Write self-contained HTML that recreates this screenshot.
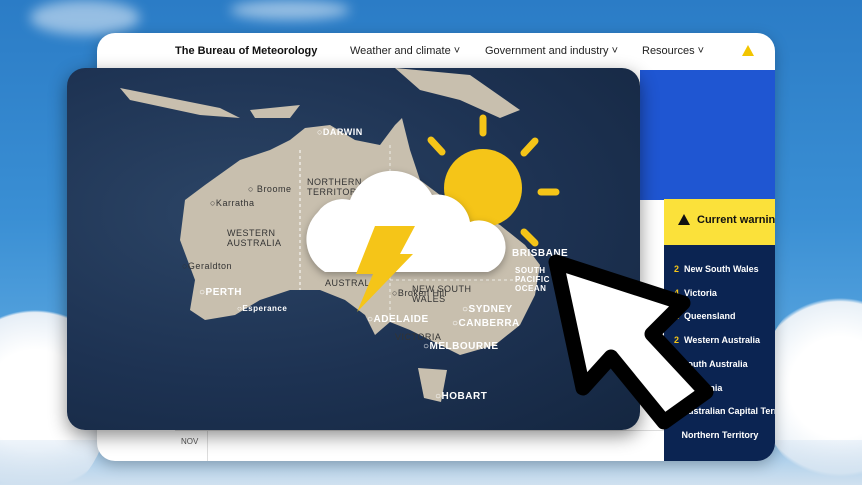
<!DOCTYPE html>
<html style="width:862px;height:485px;overflow:hidden"><head><meta charset="utf-8"><style>
*{margin:0;padding:0;box-sizing:border-box}
body{width:862px;height:485px;overflow:hidden;position:relative;font-family:"Liberation Sans",sans-serif;
background:linear-gradient(180deg,#2b7cc6 0%,#3a8fd4 45%,#5aa6df 75%,#8cbfe6 100%)}
.abs{position:absolute}
.card{left:97px;top:33px;width:678px;height:428px;background:#fff;border-radius:18px;overflow:hidden;box-shadow:0 4px 14px rgba(0,0,0,.25)}
.nav{font-size:11px;color:#222;top:45px;white-space:nowrap}
.map{left:67px;top:68px;width:573px;height:362px;border-radius:18px;overflow:hidden;
background:radial-gradient(ellipse at 30% 40%,#2c4566 0%,#1d3252 55%,#142640 100%);box-shadow:0 6px 18px rgba(0,0,0,.45)}
.lbl{position:absolute;color:#fff;font-size:9px;font-weight:bold;letter-spacing:.5px}
.dk{color:#333;font-weight:normal}
.li{position:absolute;left:10px;color:#fff;font-size:9px;font-weight:bold;white-space:nowrap}
.li b{color:#f5c518;margin-right:5px}
</style></head><body>
<div class="abs" style="left:-40px;top:300px;width:150px;height:200px;border-radius:50%;background:radial-gradient(circle,#fff 40%,#e6eef6 70%,rgba(230,238,246,0) 72%)"></div>
<div class="abs" style="left:760px;top:290px;width:160px;height:195px;border-radius:50%;background:radial-gradient(circle,#fff 40%,#e8f0f7 68%,rgba(230,238,246,0) 71%)"></div>
<div class="abs" style="left:0;top:440px;width:862px;height:45px;background:linear-gradient(180deg,rgba(200,220,240,.3),#cfe0ef)"></div>
<div class="abs" style="left:30px;top:0;width:110px;height:35px;border-radius:50%;background:rgba(255,255,255,.5);filter:blur(6px)"></div>
<div class="abs" style="left:230px;top:0;width:120px;height:20px;border-radius:50%;background:rgba(255,255,255,.5);filter:blur(6px)"></div>

<div class="abs card">
 <div class="abs" style="left:543px;top:37px;width:135px;height:130px;background:#1f56d2"></div>
 <div class="abs" style="left:567px;top:166px;width:111px;height:47px;background:#fbe13a;overflow:hidden">
  <div class="abs" style="left:14px;top:15px;width:0;height:0;border-left:6px solid transparent;border-right:6px solid transparent;border-bottom:11px solid #111"></div>
  <div class="abs" style="left:33px;top:15px;font-size:11px;font-weight:bold;color:#111;white-space:nowrap">Current warning</div>
 </div>
 <div class="abs" style="left:567px;top:212px;width:111px;height:216px;background:#0b2452;overflow:hidden">
  <div class="li" style="top:19px"><b>2</b>New South Wales</div>
  <div class="li" style="top:43px"><b>4</b>Victoria</div>
  <div class="li" style="top:66px"><b>2</b>Queensland</div>
  <div class="li" style="top:90px"><b>2</b>Western Australia</div>
  <div class="li" style="top:114px"><b>&nbsp;</b>South Australia</div>
  <div class="li" style="top:138px"><b>&nbsp;</b>Tasmania</div>
  <div class="li" style="top:161px"><b>&nbsp;</b>Australian Capital Territory</div>
  <div class="li" style="top:185px"><b>&nbsp;</b>Northern Territory</div>
 </div>
 <div class="abs" style="left:78px;top:397px;width:489px;height:1px;background:#ddd"></div>
 <div class="abs" style="left:110px;top:397px;width:1px;height:31px;background:#ddd"></div>
 <div class="abs" style="left:84px;top:404px;font-size:8px;color:#555">NOV</div>
</div>
<div class="abs nav" style="left:175px;font-weight:bold;color:#111">The Bureau of Meteorology</div>
<div class="abs nav" style="left:350px">Weather and climate ˅</div>
<div class="abs nav" style="left:485px">Government and industry ˅</div>
<div class="abs nav" style="left:642px">Resources ˅</div>
<div class="abs" style="left:742px;top:45px;width:0;height:0;border-left:6px solid transparent;border-right:6px solid transparent;border-bottom:11px solid #f2c500"></div>

<div class="abs map">
<svg width="573" height="362" viewBox="67 68 573 362" style="position:absolute;left:0;top:0">
 <g fill="#c8bfae">
 <polygon points="185,200 205,185 240,160 270,150 290,140 305,128 330,125 355,140 380,145 395,125 402,118 410,150 420,180 440,195 470,210 500,225 525,245 540,265 535,295 520,325 495,345 460,355 430,340 410,330 390,322 375,335 365,315 345,300 320,290 290,290 260,300 235,315 205,320 190,310 195,280 180,240"/>
 <polygon points="418,368 447,370 441,402 424,398"/>
 <polygon points="395,68 470,75 520,110 500,118 460,100 420,90"/>
 <polygon points="120,88 220,108 240,118 200,115 130,100"/>
 <polygon points="250,110 300,105 290,118 255,118"/>
 </g>
 <line x1="300" y1="150" x2="300" y2="290" stroke="#fff" stroke-dasharray="3,3" stroke-width="1"/>
 <line x1="390" y1="145" x2="390" y2="320" stroke="#fff" stroke-dasharray="3,3" stroke-width="1" opacity=".7"/>
 <line x1="390" y1="280" x2="520" y2="280" stroke="#fff" stroke-dasharray="3,3" stroke-width="1" opacity=".7"/>
</svg>
 <div class="lbl" style="left:250px;top:59px">○DARWIN</div>
 <div class="lbl dk" style="left:181px;top:116px">○ Broome</div>
 <div class="lbl dk" style="left:143px;top:130px">○Karratha</div>
 <div class="lbl dk" style="left:240px;top:109px">NORTHERN<br>TERRITORY</div>
 <div class="lbl dk" style="left:160px;top:160px">WESTERN<br>AUSTRALIA</div>
 <div class="lbl dk" style="left:115px;top:193px">○Geraldton</div>
 <div class="lbl" style="left:132px;top:219px;font-size:10px">○PERTH</div>
 <div class="lbl" style="left:170px;top:236px;font-size:8px">○Esperance</div>
 <div class="lbl dk" style="left:258px;top:210px">AUSTRALIA</div>
 <div class="lbl dk" style="left:325px;top:220px">○Broken Hill</div>
 <div class="lbl dk" style="left:345px;top:216px;">NEW SOUTH<br>WALES</div>
 <div class="lbl" style="left:300px;top:246px;font-size:10px">○ADELAIDE</div>
 <div class="lbl" style="left:395px;top:236px;font-size:10px">○SYDNEY</div>
 <div class="lbl" style="left:385px;top:250px;font-size:10px">○CANBERRA</div>
 <div class="lbl dk" style="left:328px;top:264px">VICTORIA</div>
 <div class="lbl" style="left:356px;top:273px;font-size:10px">○MELBOURNE</div>
 <div class="lbl" style="left:368px;top:323px;font-size:10px">○HOBART</div>
 <div class="lbl" style="left:445px;top:180px;font-size:10px">BRISBANE</div>
 <div class="lbl" style="left:448px;top:198px;font-size:8px">SOUTH<br>PACIFIC<br>OCEAN</div>
</div>

<svg width="862" height="485" style="position:absolute;left:0;top:0">
 <g stroke="#f5c518" stroke-width="7" stroke-linecap="round">
  <line x1="483" y1="118" x2="483" y2="133"/>
  <line x1="431" y1="140" x2="442" y2="152"/>
  <line x1="524" y1="153" x2="535" y2="141"/>
  <line x1="541" y1="192" x2="556" y2="192"/>
  <line x1="524" y1="232" x2="535" y2="243"/>
 </g>
 <circle cx="483" cy="188" r="39" fill="#f5c518"/>
 <g fill="#fff" style="filter:drop-shadow(0 3px 4px rgba(0,0,0,.3))">
  <path d="M325,272 A38,38 0 0 1 318,212 A30,30 0 0 1 350,200 A45,45 0 0 1 432,195 A33,33 0 0 1 470,222 A26,26 0 0 1 488,272 Z"/>
 </g>
 <polygon points="375,226 415,226 400,254 413,254 357,312 373,274 356,274" fill="#f5c518"/>
 <polygon points="556,262 583,388 611,357 664,422 706,392 652,334 683,303" fill="#fff" stroke="#000" stroke-width="15" stroke-linejoin="round"/>
</svg>
</body></html>
